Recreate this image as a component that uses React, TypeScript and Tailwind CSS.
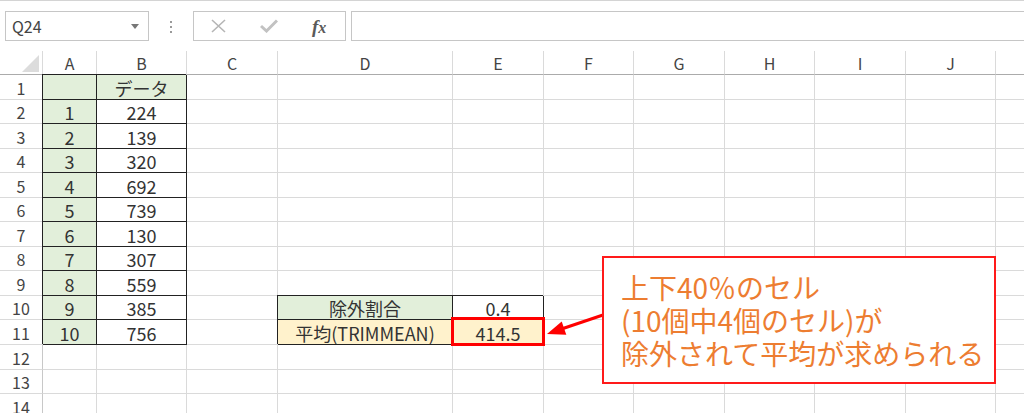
import React from "react";

const cols = ["A", "B", "C", "D", "E", "F", "G", "H", "I", "J", ""];
const values = [224, 139, 320, 692, 739, 130, 307, 559, 385, 756];

type Cell = { text?: string; bg?: string; boxed?: boolean; red?: boolean };

function cellAt(row: number, col: number): Cell {
  if (row === 1 && col === 0) return { bg: "bg-[#e2efda]", boxed: true };
  if (row === 1 && col === 1) return { text: "データ", bg: "bg-[#e2efda]", boxed: true };
  if (row >= 2 && row <= 11 && col === 0) return { text: String(row - 1), bg: "bg-[#e2efda]", boxed: true };
  if (row >= 2 && row <= 11 && col === 1) return { text: String(values[row - 2]), bg: "bg-white", boxed: true };
  if (row === 10 && col === 3) return { text: "除外割合", bg: "bg-[#e2efda]", boxed: true };
  if (row === 10 && col === 4) return { text: "0.4", bg: "bg-white", boxed: true };
  if (row === 11 && col === 3) return { text: "平均(TRIMMEAN)", bg: "bg-[#fff2cc]", boxed: true };
  if (row === 11 && col === 4) return { text: "414.5", bg: "bg-[#fff2cc]", boxed: true, red: true };
  return {};
}

function Toolbar() {
  return (
    <div className="flex h-[50px] items-start pt-[10px]">
      <div className="ml-[5px] flex h-[30px] w-[144px] items-center justify-between border border-[#c6c6c6] pl-[6px] pr-[9px] text-[16px] text-[#444]">
        <span>Q24</span>
        <svg width="8" height="5" viewBox="0 0 8 5">
          <path d="M0 0 L8 0 L4 5 Z" fill="#777" />
        </svg>
      </div>
      <div className="flex w-[44px] justify-center pt-[10px]">
        <svg width="3" height="13" viewBox="0 0 3 13">
          <rect x="0" y="0" width="2" height="2" fill="#9a9a9a" />
          <rect x="0" y="5" width="2" height="2" fill="#9a9a9a" />
          <rect x="0" y="10" width="2" height="2" fill="#9a9a9a" />
        </svg>
      </div>
      <div className="relative flex h-[30px] w-[153px] items-center border border-[#c6c6c6]">
        <svg className="ml-[16px]" width="17" height="14" viewBox="0 0 17 14">
          <path d="M2 1 L15 13 M15 1 L2 13" stroke="#b5b5b5" strokeWidth="1.6" fill="none" />
        </svg>
        <svg className="ml-[33px]" width="18" height="14" viewBox="0 0 18 14">
          <path d="M1 7 L6.5 12 L17 1.5" stroke="#c2c2c2" strokeWidth="3" fill="none" />
        </svg>
        <span className="ml-[34px] font-['Liberation_Serif',serif] text-[19px] font-bold italic leading-none text-[#5a5a5a]">
          f<span className="text-[16px]">x</span>
        </span>
      </div>
      <div className="ml-[5px] h-[30px] flex-1 border border-r-0 border-[#c6c6c6]" />
    </div>
  );
}

function Sheet() {
  const rows = Array.from({ length: 14 }, (_, i) => i + 1);
  return (
    <div className="grid grid-cols-[43px_54px_90px_91px_175px_91px_90px_91px_90px_91px_90px_90px] grid-rows-[24px_repeat(14,24.55px)]">
      <div className="relative border-r border-b border-r-[#dadada] border-b-[#ababab]">
        <svg className="absolute right-[3px] bottom-[2px]" width="17" height="17" viewBox="0 0 17 17">
          <path d="M17 0 L17 17 L0 17 Z" fill="#dcdcdc" />
        </svg>
      </div>
      {cols.map((c, i) => (
        <div
          key={i}
          className="flex items-center justify-center border-r border-b border-r-[#dadada] border-b-[#ababab] text-[16px] text-[#444]"
        >
          {c}
        </div>
      ))}
      {rows.map((r) => (
        <React.Fragment key={r}>
          <div className="flex items-end justify-center border-r border-b border-r-[#c8c8c8] border-b-[#dadada] pb-[1px] text-[16px] leading-[20px] text-[#444]">
            {r}
          </div>
          {cols.map((_, ci) => {
            const cell = cellAt(r, ci);
            if (!cell.boxed) {
              return <div key={ci} className="border-r border-b border-[#dadada]" />;
            }
            return (
              <div
                key={ci}
                className={`relative flex items-end justify-center border-r border-b border-[#222] pb-[1px] text-[18px] leading-[20px] text-[#333] shadow-[-1px_-1px_0_0_#222] ${cell.bg}`}
              >
                {cell.text}
                {cell.red && (
                  <div className="absolute -top-[3px] -left-[2px] -right-[2px] -bottom-[2px] border-[3px] border-[#ff0000]" />
                )}
              </div>
            );
          })}
        </React.Fragment>
      ))}
    </div>
  );
}

export default function App() {
  return (
    <div className="relative h-[413px] w-[1024px] overflow-hidden border-t border-[#d4d4d4] bg-white font-['Noto_Sans_CJK_JP','Noto_Sans',sans-serif]">
      <Toolbar />
      <Sheet />

      <svg className="absolute left-0 top-0" width="1024" height="413" viewBox="0 0 1024 413">
        <line x1="603" y1="314" x2="560" y2="328.5" stroke="#ff0000" strokeWidth="3" />
        <polygon points="547,333 566.3,333.7 561.7,320.5" fill="#ff0000" />
      </svg>

      <div className="absolute left-[602px] top-[255px] h-[128px] w-[394px] border-2 border-[#ff1a1a] bg-white pl-[17px] pt-[13px] text-[28px] leading-[33px] text-[#ed7d31]">
        <div>上下40％のセル</div>
        <div>(10個中4個のセル)が</div>
        <div>除外されて平均が求められる</div>
      </div>
    </div>
  );
}
